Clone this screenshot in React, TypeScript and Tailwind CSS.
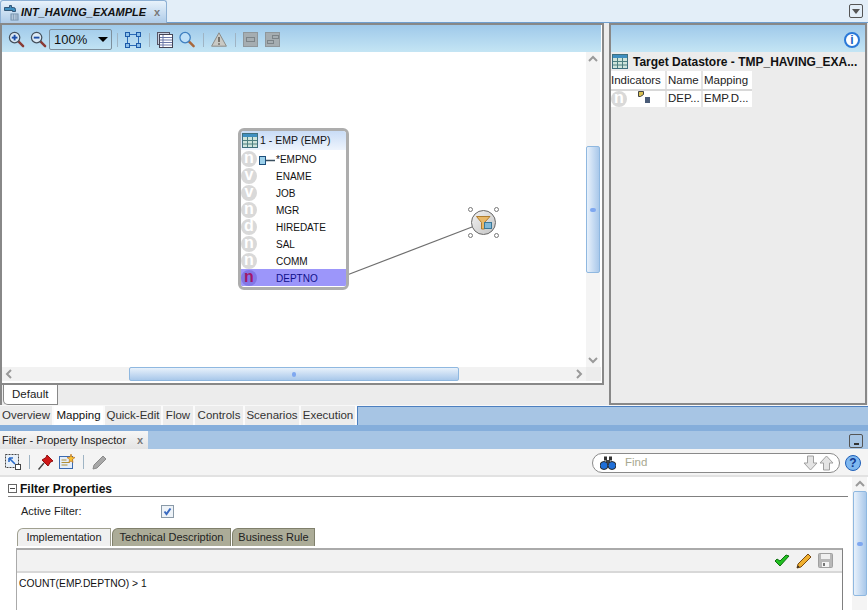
import React from "react";

const font = "[font-family:'Liberation_Sans',Arial,sans-serif]";

function Sep({ className = "ml-[8px] mr-[7px]" }: { className?: string }) {
  return <div className={"w-px h-[14px] shrink-0 bg-[#9fb4c4] " + className} />;
}

function MagIcon({ sign }: { sign?: "+" | "-" }) {
  return (
    <svg width="17" height="17" viewBox="0 0 18 18" className="shrink-0">
      <path d="M10.5 10.5 L16 16" stroke="#8a3a34" strokeWidth="2.6" strokeLinecap="round" />
      <circle cx="7" cy="7" r="5.5" fill="#dbe9f5" stroke="#44505c" strokeWidth="1.3" />
      <path d="M4 7h6" stroke="#1d4fa8" strokeWidth="2" />
      {sign === "+" && <path d="M7 4v6" stroke="#1d4fa8" strokeWidth="2" />}
    </svg>
  );
}

function ToolBar() {
  return (
    <div className="h-[27px] shrink-0 flex items-center pl-[6px] pt-[2px] bg-gradient-to-b from-[#9fc9ea] to-[#c4e5f4]">
      <MagIcon sign="+" />
      <div className="ml-[5px]">
        <MagIcon sign="-" />
      </div>
      <div className="ml-[2px] w-[63px] h-[21px] border border-[#7d8f9c] rounded-[2px] flex items-center pl-[4px] pr-[3px] justify-between text-[13px] text-[#111]">
        100%
        <div className="w-0 h-0 border-x-[5px] border-x-transparent border-t-[5px] border-t-black" />
      </div>
      <Sep className="ml-[5px] mr-[7px]" />
      <svg width="16" height="16" viewBox="0 0 16 16" className="shrink-0">
        <rect x="2.5" y="2.5" width="11" height="11" fill="none" stroke="#2a6ab8" strokeWidth="1" />
        <rect x="0.5" y="0.5" width="4" height="4" fill="#8cc0ea" stroke="#1d5aa8" />
        <rect x="11.5" y="0.5" width="4" height="4" fill="#8cc0ea" stroke="#1d5aa8" />
        <rect x="0.5" y="11.5" width="4" height="4" fill="#8cc0ea" stroke="#1d5aa8" />
        <rect x="11.5" y="11.5" width="4" height="4" fill="#8cc0ea" stroke="#1d5aa8" />
      </svg>
      <Sep />
      <svg width="16" height="16" viewBox="0 0 16 16" className="shrink-0">
        <rect x="0.5" y="0.5" width="12" height="12" fill="#c8d0e0" stroke="#556" />
        <rect x="2.5" y="2.5" width="13" height="13" fill="#fff" stroke="#445" />
        <path d="M3 5.5h12M3 8h12M3 10.5h12M3 13h12M6 3v12" stroke="#6a78a8" strokeWidth="1" />
      </svg>
      <div className="ml-[6px]">
        <svg width="16" height="17" viewBox="0 0 17 17">
          <path d="M10 10 L15.5 15.5" stroke="#a9683c" strokeWidth="2.6" strokeLinecap="round" />
          <circle cx="6.5" cy="6.5" r="5.5" fill="#bfe0f8" stroke="#3f7fc0" strokeWidth="1.3" />
        </svg>
      </div>
      <Sep />
      <svg width="16" height="15" viewBox="0 0 16 15" className="shrink-0">
        <path d="M8 0.8 L15.4 14.2 H0.6 Z" fill="#c9c9c4" stroke="#8c8c88" />
        <path d="M8 5v5" stroke="#77736c" strokeWidth="2" />
        <circle cx="8" cy="12" r="1" fill="#77736c" />
      </svg>
      <Sep />
      <div className="w-[15px] h-[15px] bg-[#a5adb1] border border-[#8f979b] flex items-center justify-center">
        <div className="w-[9px] h-[5px] border border-[#7c8488]" />
      </div>
      <div className="ml-[7px] w-[15px] h-[15px] bg-[#a5adb1] border border-[#8f979b] relative">
        <div className="absolute left-[6px] top-[2px] w-[7px] h-[4px] border border-[#7c8488]" />
        <div className="absolute left-[1px] top-[7px] w-[7px] h-[4px] border border-[#7c8488]" />
      </div>
    </div>
  );
}

const columns: [string, boolean?][] = [
  ["n"],
  ["v"],
  ["v"],
  ["n"],
  ["d"],
  ["n"],
  ["n"],
  ["n", true],
];
const names = ["*EMPNO", "ENAME", "JOB", "MGR", "HIREDATE", "SAL", "COMM", "DEPTNO"];

function TableIcon({ className }: { className?: string }) {
  return (
    <svg width="16" height="15" viewBox="0 0 16 15" className={"shrink-0 " + (className ?? "")}>
      <rect x="0.5" y="0.5" width="15" height="14" fill="#cfe4dc" stroke="#3f6f7e" />
      <rect x="1" y="1" width="14" height="3" fill="#3f8fc0" />
      <path d="M1 7.5h14M1 11h14M5.5 4v10M10.5 4v10" stroke="#4d7f80" strokeWidth="1" />
    </svg>
  );
}

function Badge({ letter, active }: { letter: string; active?: boolean }) {
  return (
    <div
      className={
        "w-[16px] h-[16px] shrink-0 rounded-full flex items-center justify-center text-[16px] leading-[12px] font-bold pb-[2px] " +
        (active ? "bg-[#8278e6] text-[#a0186a]" : "bg-[#d9d9d9] text-white")
      }
    >
      {letter}
    </div>
  );
}

function EmpNode() {
  return (
    <div className="absolute left-[236px] top-[76px] w-[111px] h-[162px] rounded-[6px] border-[3px] border-[#adadad] bg-white overflow-hidden">
      <div className="h-[19px] flex items-center pl-[1px] gap-[2px] bg-gradient-to-b from-[#c9dcf6] to-[#eef4fd] text-[10.5px] text-[#111] whitespace-nowrap">
        <TableIcon />1 - EMP (EMP)
      </div>
      {names.map((name, i) => (
        <div
          key={name}
          className={
            "h-[17px] flex items-center text-[10px] leading-[13px] relative " +
            (columns[i][1] ? "bg-[#9c96fa] text-[#10108a]" : "text-[#111]")
          }
        >
          <Badge letter={columns[i][0]} active={columns[i][1]} />
          {i === 0 && (
            <svg width="18" height="9" viewBox="0 0 18 9" className="absolute left-[18px] top-[6px]">
              <rect x="0.5" y="0.5" width="6" height="8" fill="#9cd0ea" stroke="#1d4f7c" />
              <path d="M7 4.5h9" stroke="#3a4f60" strokeWidth="1.6" />
            </svg>
          )}
          <span className="absolute top-[3px] left-[35px]">{name}</span>
        </div>
      ))}
    </div>
  );
}

function FilterNode() {
  const handle = "absolute w-[5px] h-[5px] rounded-full bg-white border border-[#777]";
  return (
    <div className="absolute left-[466px] top-[155px] w-[31px] h-[31px]">
      <div className={handle + " left-0 top-0"} />
      <div className={handle + " left-[26px] top-0"} />
      <div className={handle + " left-0 top-[26px]"} />
      <div className={handle + " left-[26px] top-[26px]"} />
      <div className="absolute left-[3px] top-[3px] w-[25px] h-[25px] rounded-full border border-[#666] bg-gradient-to-br from-[#f2f2f2] to-[#c4c4c4] flex items-center justify-center">
        <svg width="16" height="14" viewBox="0 0 16 14">
          <path d="M0.5 0.5 H14 L8.5 6.5 V13 H5.5 V6.5 Z" fill="#e8b868" stroke="#b07d2e" />
          <rect x="8.5" y="6.5" width="7" height="6" fill="#7fb8d8" stroke="#3a7898" />
        </svg>
      </div>
    </div>
  );
}

function ScrollArrow({ d }: { d: string }) {
  return (
    <svg width="10" height="10" viewBox="0 0 10 10">
      <path d={d} fill="none" stroke="#9a9a9a" strokeWidth="2" />
    </svg>
  );
}

const lowerTabs = [
  { label: "Overview", width: "w-[54px]" },
  { label: "Mapping", width: "w-[51px]" },
  { label: "Quick-Edit", width: "w-[58px]" },
  { label: "Flow", width: "w-[32px]" },
  { label: "Controls", width: "w-[50px]" },
  { label: "Scenarios", width: "w-[56px]" },
  { label: "Execution", width: "w-[56px]" },
];

export default function App() {
  return (
    <div className={"w-[868px] h-[610px] overflow-hidden flex flex-col bg-[#ececec] text-[#222] " + font}>
      {/* editor tab strip */}
      <div className="h-[23px] shrink-0 flex bg-[#e3eef8] border-b border-[#6f9fd0]">
        <div className="w-[167px] h-[23px] shrink-0 flex items-center pl-[2px] bg-gradient-to-b from-[#e8f2fb] to-[#aecbe8] border border-[#8db0d4] rounded-t-[3px] border-b-0 whitespace-nowrap">
          <svg width="17" height="17" viewBox="0 0 17 17" className="shrink-0">
            <path d="M1.5 3.5h5v-2h2v2h2a2 2 0 0 1 2 2v2h-3v-1h-8z" fill="#3f8fc0" stroke="#1f3f60" strokeWidth="0.8" />
            <rect x="8" y="10" width="7" height="6" fill="#cfe0ee" stroke="#6f8ca8" />
            <path d="M8 12h7M8 14h7M10.5 10v6M13 10v6" stroke="#6f8ca8" strokeWidth="0.6" />
          </svg>
          <span className="ml-[1px] text-[11px] font-bold italic text-[#111]">INT_HAVING_EXAMPLE</span>
          <span className="ml-[8px] text-[11px] font-bold text-[#777]">x</span>
        </div>
        <div className="flex-1 flex justify-end items-start pt-[4px] pr-[5px]">
          <div className="w-[14px] h-[14px] rounded-[2px] border border-[#555] flex items-center justify-center">
            <div className="w-0 h-0 border-x-[4px] border-x-transparent border-t-[5px] border-t-[#555]" />
          </div>
        </div>
      </div>

      {/* diagram + target datastore */}
      <div className="h-[382px] shrink-0 flex">
        <div className="w-[604px] shrink-0 flex flex-col">
          <div className="flex-1 flex flex-col border-x-2 border-t-2 border-[#888]">
            <div className="flex-1 flex flex-col border-r border-white bg-white">
              <ToolBar />
              <div className="h-[315px] flex bg-white">
                <div className="flex-1 relative">
                  <svg width="560" height="300" className="absolute left-0 top-0">
                    <line x1="345" y1="223" x2="470" y2="175" stroke="#6e6e6e" strokeWidth="1.2" />
                  </svg>
                  <EmpNode />
                  <FilterNode />
                </div>
                <div className="w-[14px] mr-px flex flex-col items-center bg-[#f4f4f4]">
                  <div className="h-[14px] flex items-center">
                    <ScrollArrow d="M1 7 L5 3 L9 7" />
                  </div>
                  <div className="mt-[80px] w-[14px] h-[127px] rounded-[2px] border border-[#8fb8e0] bg-gradient-to-r from-[#e8f1fb] to-[#a9c8ea] flex items-center justify-center">
                    <div className="w-[6px] h-[4px] rounded-full bg-[#7fa8f0]" />
                  </div>
                  <div className="flex-1" />
                  <div className="h-[14px] flex items-center">
                    <ScrollArrow d="M1 3 L5 7 L9 3" />
                  </div>
                </div>
              </div>
              <div className="h-[14px] flex bg-[#f2f2f2]">
                <div className="w-[14px] flex items-center justify-center">
                  <ScrollArrow d="M7 1 L3 5 L7 9" />
                </div>
                <div className="ml-[113px] w-[330px] h-[14px] rounded-[2px] border border-[#8fb8e0] bg-gradient-to-b from-[#e8f1fb] to-[#a9c8ea] flex items-center justify-center">
                  <div className="w-[4px] h-[5px] rounded-full bg-[#7fa8f0]" />
                </div>
                <div className="flex-1" />
                <div className="w-[14px] flex items-center justify-center">
                  <ScrollArrow d="M3 1 L7 5 L3 9" />
                </div>
                <div className="w-[15px] bg-[#ececec]" />
              </div>
            </div>
          </div>
          <div className="h-[22px] shrink-0 border-t-2 border-l-2 border-[#888] bg-[#ececec] relative">
            <div className="absolute left-[1px] top-0 w-[55px] h-[20px] bg-white border-r border-b border-l border-[#888] rounded-bl-[5px] text-[11.5px] pl-[8px] leading-[19px] text-[#222]">
              Default
            </div>
          </div>
        </div>
        <div className="w-[5px] shrink-0 bg-[#ececec]" />
        <div className="w-[258px] shrink-0 mr-px border-2 border-[#888] flex flex-col bg-[#ececec]">
          <div className="h-[27px] shrink-0 flex justify-end items-center pr-[5px] bg-gradient-to-b from-[#9fc9ea] to-[#c4e5f4]">
            <div className="mt-[2px] w-[16px] h-[16px] rounded-full border-2 border-[#2a78d8] bg-white text-[#1a62c0] text-[12px] leading-[12px] font-bold text-center">
              i
            </div>
          </div>
          <div className="h-[19px] shrink-0 flex items-center pl-[1px] text-[12px] font-bold text-[#111] whitespace-nowrap">
            <TableIcon className="mr-[5px]" />
            Target Datastore - TMP_HAVING_EXA...
          </div>
          <div className="flex text-[11.5px] h-[20px] leading-[19px] w-[141px] shrink-0 bg-white border-b-2 border-[#d8d8d8]">
            <div className="w-[56px] border-r-2 border-[#e4e4e4] whitespace-nowrap">Indicators</div>
            <div className="w-[36px] border-r-2 border-[#e4e4e4] pl-[1px]">Name</div>
            <div className="flex-1 pl-[1px]">Mapping</div>
          </div>
          <div className="flex text-[11.5px] h-[16px] leading-[15px] w-[141px] shrink-0 bg-white">
            <div className="w-[56px] border-r-2 border-[#e4e4e4] relative">
              <div className="absolute left-0 top-0">
                <Badge letter="n" />
              </div>
              <svg width="13" height="13" viewBox="0 0 13 13" className="absolute left-[27px] top-0">
                <path d="M0.5 0.5h5v3l-3 2h-2z" fill="#d8c050" stroke="#444" />
                <rect x="7" y="6" width="5" height="6" fill="#4a5c78" />
              </svg>
            </div>
            <div className="w-[36px] border-r-2 border-[#e4e4e4] pl-[1px]">DEP...</div>
            <div className="flex-1 pl-[1px]">EMP.D...</div>
          </div>
        </div>
      </div>

      {/* view tabs */}
      <div className="h-[20px] shrink-0 flex items-end text-[11.5px] text-[#333] bg-[#ececec] border-t border-[#f8f8f8]">
        {lowerTabs.map((t) => (
          <div
            key={t.label}
            className={
              "h-[19px] leading-[18px] text-center whitespace-nowrap border-r-2 border-[#fbfbfb] " +
              t.width +
              (t.label === "Mapping" ? " bg-white text-[#111]" : " bg-[#ececec]")
            }
          >
            {t.label}
          </div>
        ))}
        <div className="flex-1 h-[19px] bg-[#a7c5e4] border-t border-l border-[#4d80c0]" />
      </div>

      {/* property inspector */}
      <div className="h-[6px] shrink-0 bg-[#85aedb]" />
      <div className="h-[18px] shrink-0 flex bg-[#a7c5e4]">
        <div className="w-[148px] shrink-0 flex items-center pl-[2px] text-[11px] text-[#222] bg-gradient-to-b from-[#f6f6f6] to-[#e4e4e4] whitespace-nowrap">
          Filter - Property Inspector
          <span className="ml-[11px] text-[11px] font-bold text-[#777]">x</span>
        </div>
        <div className="flex-1 flex justify-end items-center pr-[5px]">
          <div className="w-[14px] h-[14px] mt-[2px] rounded-[2px] border border-[#555] flex items-end justify-center pb-[2px]">
            <div className="w-[5px] h-[2px] bg-[#333]" />
          </div>
        </div>
      </div>
      <div className="h-[28px] shrink-0 flex items-center pl-[5px] pr-[7px] bg-[#f4f4f4] border-b-2 border-[#e2e2e2]">
        <svg width="16" height="16" viewBox="0 0 16 16" className="shrink-0">
          <rect x="0.5" y="0.5" width="13" height="13" fill="#e8f0f8" stroke="#444" strokeDasharray="2 1" />
          <path d="M4 4 L10 10 M4 4h4M4 4v4" stroke="#2a6ac8" strokeWidth="1.6" fill="none" />
          <rect x="10.5" y="10.5" width="5" height="5" fill="#fff" stroke="#444" />
        </svg>
        <Sep />
        <svg width="16" height="16" viewBox="0 0 16 16" className="ml-[1px] shrink-0">
          <path d="M0.5 15.5 L6 9" stroke="#444" strokeWidth="1.4" />
          <path d="M9 1 L15 7 L12.5 8 L10 12 L4 6 L8 3.5 Z" fill="#d01818" stroke="#901010" />
        </svg>
        <svg width="16" height="16" viewBox="0 0 16 16" className="ml-[5px] shrink-0">
          <rect x="0.5" y="2.5" width="13" height="12" fill="#e4eefa" stroke="#3a6ab0" />
          <path d="M2.5 6h5M2.5 8.5h8M2.5 11h6" stroke="#b09038" strokeWidth="1" />
          <path d="M12 0 L13 3 L16 3.5 L13.5 5.5 L14 8.5 L12 7 L10 8.5 L10.5 5.5 L8 3.5 L11 3 Z" fill="#f8c030" stroke="#b86a18" strokeWidth="0.6" />
        </svg>
        <Sep />
        <svg width="17" height="17" viewBox="0 0 17 17" className="shrink-0">
          <path d="M2 15 L3 11 L12 2 L15 5 L6 14 Z" fill="#a8a8a8" stroke="#8a8a8a" />
        </svg>
        <div className="flex-1" />
        <div className="mt-[2px] w-[248px] h-[20px] rounded-[10px] border border-[#8a8a8a] bg-white flex items-center pl-[7px] pr-[5px] text-[11.5px] text-[#a8a890]">
          <svg width="16" height="14" viewBox="0 0 16 14" className="shrink-0">
            <rect x="4" y="0.5" width="3" height="4" fill="#333" />
            <rect x="9" y="0.5" width="3" height="4" fill="#333" />
            <rect x="6" y="4" width="4" height="3" fill="#444" />
            <circle cx="4" cy="9.5" r="4" fill="#1f6fd8" stroke="#2a2a2a" />
            <circle cx="12" cy="9.5" r="4" fill="#1f6fd8" stroke="#2a2a2a" />
          </svg>
          <span className="ml-[9px]">Find</span>
          <div className="flex-1" />
          <svg width="15" height="16" viewBox="0 0 15 16" className="shrink-0">
            <path d="M4.5 1h6v7h3.5L7.5 15 1 8h3.5z" fill="#e4e4e4" stroke="#a0a0a0" />
          </svg>
          <svg width="15" height="16" viewBox="0 0 15 16" className="ml-[1px] shrink-0">
            <path d="M4.5 15h6V8h3.5L7.5 1 1 8h3.5z" fill="#e4e4e4" stroke="#a0a0a0" />
          </svg>
        </div>
        <div className="ml-[5px] mt-[2px] w-[16px] h-[16px] rounded-full border border-[#1f5fb8] bg-[#7fb8f0] text-[#123a90] text-[12px] leading-[14px] font-bold text-center">
          ?
        </div>
      </div>

      <div className="flex-1 flex bg-white min-h-0">
        <div className="flex-1 pl-[8px] pr-[4px] pt-[4px] min-w-0">
          <div className="h-[15px] flex items-center border-b border-[#808080] box-content text-[12px] font-bold text-[#111]">
            <div className="w-[9px] h-[9px] border border-[#666] flex items-center justify-center mr-[3px]">
              <div className="w-[5px] h-px bg-[#444]" />
            </div>
            Filter Properties
          </div>
          <div className="h-[28px] flex items-center pl-[13px] text-[11px] text-[#222]">
            <span className="w-[140px]">Active Filter:</span>
            <div className="w-[13px] h-[13px] border border-[#8a9aa8] bg-[#eef3f8] flex items-center justify-center">
              <svg width="9" height="9" viewBox="0 0 9 9">
                <path d="M1.5 4.5 L3.5 7 L7.5 1.5" fill="none" stroke="#3a6ac0" strokeWidth="2" />
              </svg>
            </div>
          </div>
          <div className="ml-[9px] h-[18px] mt-[3px] flex gap-px text-[11px] leading-[17px]">
            <div className="w-[94px] bg-[#f0f0f0] border border-b-0 border-[#a0a090] rounded-tl-[6px] text-center text-[#222]">
              Implementation
            </div>
            <div className="w-[119px] bg-[#acac98] border border-b-0 border-[#80806c] rounded-tl-[6px] text-center text-[#222]">
              Technical Description
            </div>
            <div className="w-[83px] bg-[#acac98] border border-b-0 border-[#80806c] rounded-tl-[6px] text-center text-[#222]">
              Business Rule
            </div>
          </div>
          <div className="ml-[8px] mr-[5px] mt-[2px] h-[70px] border-l border-r border-t-2 border-[#aaa] border-r-[#808080] bg-white">
            <div className="h-[23px] bg-[#f2f2f2] border-b-2 border-[#d8d8d8] flex items-center justify-end gap-[6px] pr-[9px]">
              <svg width="16" height="14" viewBox="0 0 16 14">
                <path d="M1 7 L6 12 L15 2 L12 1 L6 7 L3 5 Z" fill="#22c022" stroke="#0f700f" />
              </svg>
              <svg width="16" height="16" viewBox="0 0 16 16">
                <path d="M1 15 L2 11 L12 1 L15 4 L5 14 Z" fill="#f0b030" stroke="#7a4a10" />
                <path d="M1 15 L2 12.5 L3.5 14 Z" fill="#222" />
              </svg>
              <svg width="15" height="15" viewBox="0 0 15 15">
                <rect x="0.5" y="0.5" width="14" height="14" rx="1" fill="#b8b8b8" stroke="#a0a0a0" />
                <rect x="3" y="1" width="9" height="5" fill="#f0f0f0" />
                <rect x="4" y="9" width="7" height="5" fill="#f4f4f4" />
                <rect x="5" y="10" width="2" height="3" fill="#777" />
              </svg>
            </div>
            <div className="pl-[2px] pt-[3px] text-[10.3px] text-[#111]">COUNT(EMP.DEPTNO) &gt; 1</div>
          </div>
        </div>
        <div className="w-[15px] shrink-0 bg-[#f4f4f4] flex flex-col items-center mr-px">
          <div className="h-[14px] flex items-center">
            <ScrollArrow d="M1 7 L5 3 L9 7" />
          </div>
          <div className="w-[14px] h-[105px] rounded-[2px] border border-[#8fb8e0] bg-gradient-to-r from-[#e8f1fb] to-[#a9c8ea] flex items-center justify-center">
            <div className="w-[6px] h-[4px] rounded-full bg-[#7fa8f0]" />
          </div>
        </div>
      </div>
    </div>
  );
}
